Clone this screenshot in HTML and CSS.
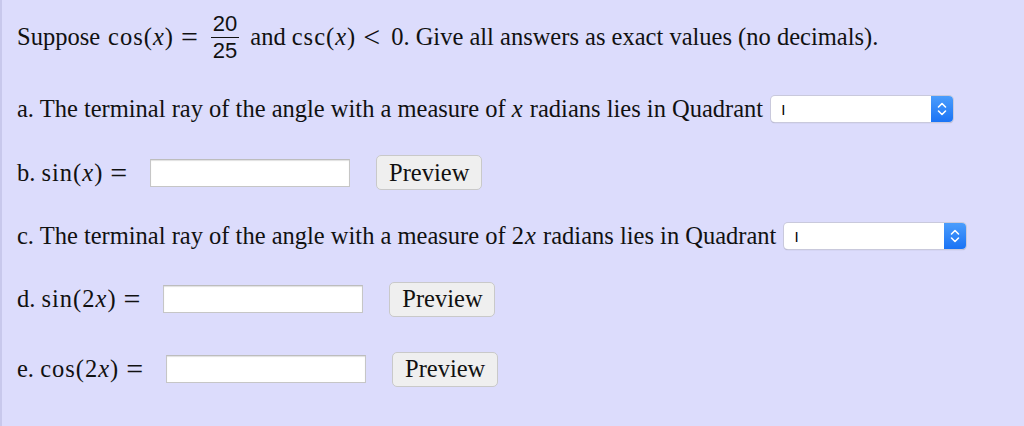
FILE: index.html
```html
<!DOCTYPE html>
<html>
<head>
<meta charset="utf-8">
<link rel="stylesheet" href="styles.css">
</head>
<body>
<div class="problem">
  <div class="row row-intro">
    <span class="lead">Suppose</span>
    <span class="math"><span class="fn">cos</span>(<span class="var">x</span>)</span>
    <span class="rel">=</span>
    <span class="frac"><span class="num">20</span><span class="den">25</span></span>
    <span class="txt">and</span>
    <span class="math"><span class="fn">csc</span>(<span class="var">x</span>)</span>
    <span class="rel">&lt;</span>
    <span class="tail">0. Give all answers as exact values (no decimals).</span>
  </div>

  <div class="row row-a">
    <span>a. The terminal ray of the angle with a measure of <span class="var">x</span> radians lies in Quadrant</span>
    <span class="select"><select><option>I</option><option>II</option><option>III</option><option>IV</option></select><span class="arrows"><svg width="10" height="14" viewBox="0 0 10 14"><path d="M1.5 5 L5 1.5 L8.5 5 M1.5 9 L5 12.5 L8.5 9" fill="none" stroke="#fff" stroke-width="1.6" stroke-linecap="round" stroke-linejoin="round"/></svg></span></span>
  </div>

  <div class="row row-b">
    <span>b. <span class="math"><span class="fn">sin</span>(<span class="var">x</span>)</span></span><span class="rel">=</span>
    <input class="answer" type="text">
    <button class="preview">Preview</button>
  </div>

  <div class="row row-c">
    <span>c. The terminal ray of the angle with a measure of <span class="math">2<span class="var">x</span></span> radians lies in Quadrant</span>
    <span class="select"><select><option>I</option><option>II</option><option>III</option><option>IV</option></select><span class="arrows"><svg width="10" height="14" viewBox="0 0 10 14"><path d="M1.5 5 L5 1.5 L8.5 5 M1.5 9 L5 12.5 L8.5 9" fill="none" stroke="#fff" stroke-width="1.6" stroke-linecap="round" stroke-linejoin="round"/></svg></span></span>
  </div>

  <div class="row row-d">
    <span>d. <span class="math"><span class="fn">sin</span>(2<span class="var">x</span>)</span></span><span class="rel">=</span>
    <input class="answer" type="text">
    <button class="preview">Preview</button>
  </div>

  <div class="row row-e">
    <span>e. <span class="math"><span class="fn">cos</span>(2<span class="var">x</span>)</span></span><span class="rel">=</span>
    <input class="answer" type="text">
    <button class="preview">Preview</button>
  </div>
</div>
</body>
</html>
```

FILE: styles.css
```css
html, body {
  margin: 0;
  padding: 0;
}
body {
  background: #dcdcfc;
  font-family: "Liberation Serif", "Times New Roman", serif;
  font-size: 24.5px;
  color: #111;
}
.problem {
  height: 426px;
  box-sizing: border-box;
  border-left: 2px solid #c8c8ec;
  padding: 12px 0 0 15px;
  display: flex;
  flex-direction: column;
}
.row {
  display: flex;
  align-items: center;
  white-space: pre;
}
.row-intro { height: 50px; }
.row-a { height: 26px; margin-top: 34px; }
.row-b { height: 35px; margin-top: 33px; }
.row-c { height: 26px; margin-top: 33px; }
.row-d { height: 36px; margin-top: 32px; }
.row-e { height: 36px; margin-top: 34px; }

.var { font-style: italic; letter-spacing: 1px; }
.math { letter-spacing: 1px; }
.rel {
  font-size: 30px;
  line-height: 1;
  margin: 0 12px 0 7px;
}
.lead { margin-right: 8px; }
.txt { margin: 0 6px 0 10px; }
.tail { margin-left: -1px; }

.frac {
  display: inline-flex;
  flex-direction: column;
  align-items: center;
  font-family: "Liberation Sans", Arial, sans-serif;
  font-size: 22px;
  line-height: 24px;
  padding: 0 1px;
}
.frac .num {
  border-bottom: 1px solid #111;
  padding: 0 2px 1px;
}
.frac .den {
  padding-top: 1px;
}

.select {
  display: inline-flex;
  width: 182px;
  height: 26px;
  margin-left: 8px;
  background: #fff;
  border-radius: 4px;
  box-shadow: 0 0 0 1px #c9c9dc, 0 1px 1px #9a9ab0;
  overflow: hidden;
}
.select select {
  flex: 1;
  -webkit-appearance: none;
  appearance: none;
  border: 0;
  background: transparent;
  font-family: "Liberation Sans", Arial, sans-serif;
  font-size: 15px;
  color: #000;
  padding: 0 0 0 10px;
  margin: 0;
  outline: none;
}
.select .arrows {
  width: 22px;
  background: linear-gradient(#4b9dfc, #1a73f5);
  display: flex;
  align-items: center;
  justify-content: center;
}

.answer {
  box-sizing: border-box;
  width: 200px;
  height: 28px;
  margin: 0 0 0 11px;
  border: 1px solid #c6c6c6;
  border-top-color: #bdbdbd;
  background: #fff;
  box-shadow: inset 0 1px 1px #e0e0e0;
  font-size: 16px;
  padding: 0 4px;
}
.preview {
  box-sizing: border-box;
  width: 106px;
  height: 35px;
  margin-left: 26px;
  background: #efefef;
  border: 1px solid #c9c9c9;
  border-radius: 5px;
  font-family: "Liberation Serif", "Times New Roman", serif;
  font-size: 24.5px;
  color: #111;
  padding: 0;
}
```
